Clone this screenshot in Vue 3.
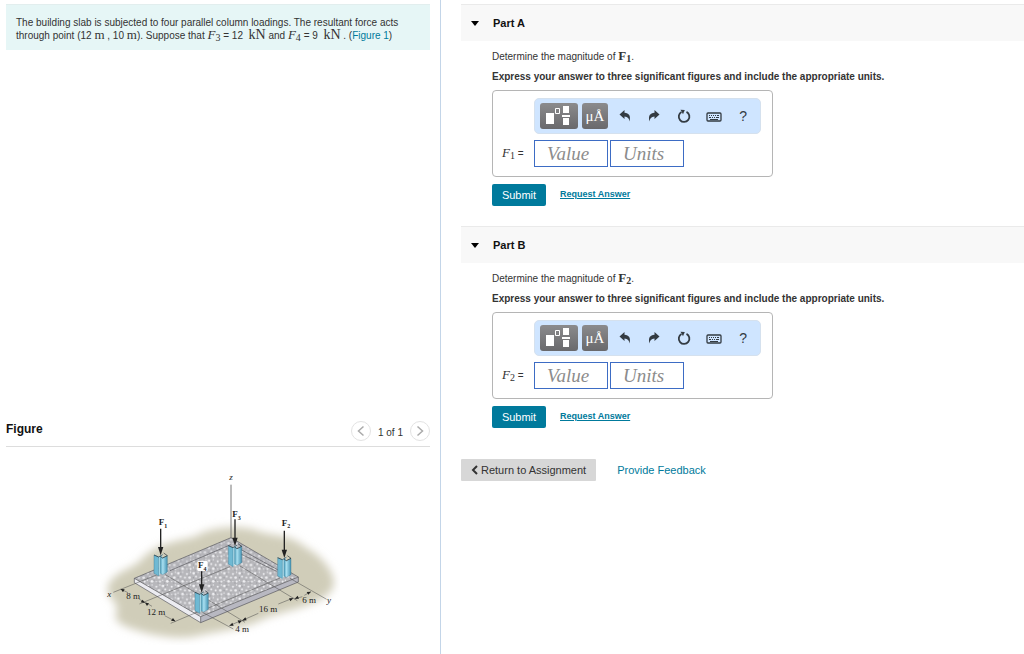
<script setup>
import { ref } from 'vue'

const parts = ref([
  { id: 'A', sub: '1', open: true, value: '', units: '' },
  { id: 'B', sub: '2', open: true, value: '', units: '' },
])

const columns = [
  { x: 162, y: 250, tail: 176 },
  { x: 385, y: 222, tail: 148 },
  { x: 533, y: 258, tail: 182 },
  { x: 285, y: 362, tail: 304 },
]

const forces = [
  { x: 176, y: 166, n: '1' },
  { x: 397, y: 142, n: '3' },
  { x: 545, y: 167, n: '2' },
  { x: 294, y: 295, n: '4' },
]
</script>

<template>
  <div class="page">
    <section class="left">
      <div class="problem">
        The building slab is subjected to four parallel column loadings. The resultant force acts
        through point (12 <span class="unit">m</span> , 10 <span class="unit">m</span>). Suppose that
        <span class="math"><i>F</i><sub>3</sub></span> = 12 &nbsp;<span class="kn">kN</span> and
        <span class="math"><i>F</i><sub>4</sub></span> = 9 &nbsp;<span class="kn">kN</span> .
        (<a href="#figure">Figure 1</a>)
      </div>

      <div id="figure" class="figure">
        <header class="figure-head">
          <h2>Figure</h2>
          <nav class="pager">
            <button type="button" aria-label="Previous figure">
              <svg viewBox="0 0 8 12" width="8" height="12"><path d="M6.5 1.5 1.5 6l5 4.5" /></svg>
            </button>
            <span>1 of 1</span>
            <button type="button" aria-label="Next figure">
              <svg viewBox="0 0 8 12" width="8" height="12"><path d="M1.5 1.5 6.5 6l-5 4.5" /></svg>
            </button>
          </nav>
        </header>

        <svg class="drawing" viewBox="0 0 720 525" role="img" aria-label="Building slab with four column loads">
          <defs>
            <filter id="soft" x="-10%" y="-15%" width="120%" height="130%"><feGaussianBlur stdDeviation="13" /></filter>
            <linearGradient id="steel" x1="0" x2="1">
              <stop offset="0" stop-color="#4e9fbd" /><stop offset=".35" stop-color="#a9dff0" /><stop offset="1" stop-color="#4594b4" />
            </linearGradient>
            <pattern id="stone" width="46" height="38" patternUnits="userSpaceOnUse">
              <rect width="46" height="38" fill="#b7b7bb" />
              <g fill="#f0f0f3">
                <circle cx="5" cy="6" r="4" /><circle cx="18" cy="3" r="2" /><circle cx="31" cy="8" r="3" />
                <circle cx="42" cy="3" r="2" /><circle cx="12" cy="16" r="3" /><circle cx="25" cy="19" r="3" />
                <circle cx="39" cy="19" r="4" /><circle cx="4" cy="27" r="2" /><circle cx="18" cy="30" r="4" />
                <circle cx="31" cy="31" r="2" /><circle cx="42" cy="31" r="3" />
              </g>
              <g fill="#9c9ca2">
                <circle cx="12" cy="8" r="2" /><circle cx="37" cy="12" r="2" /><circle cx="4" cy="19" r="2" />
                <circle cx="24" cy="27" r="2" /><circle cx="10" cy="35" r="2" /><circle cx="37" cy="35" r="2" />
              </g>
            </pattern>
          </defs>

          <path
            class="ground"
            d="M28 338 C60 295 100 300 130 262 C180 215 235 215 290 198 C330 168 440 164 480 186 C540 201 575 195 620 235 C675 262 720 330 695 360 C665 405 560 420 495 445 C430 480 340 485 290 498 C230 510 160 495 125 485 C70 470 35 455 50 425 C60 390 5 380 28 338Z"
          />

          <path class="front" d="M103 325v13l199 120V440Z" />
          <path class="side" d="M302 440v18l293-122v-15Z" />
          <path class="top" d="M103 325 393 203l202 118-293 119Z" />
          <path class="rim" d="M103 325 393 203l202 118-8 5-193-98-222 90Z" />
          <path class="edge" d="M210 302 392 224M418 236l120 66M418 250l112 54M103 325 393 203l202 118" />
          <path class="edge" d="M103 325v13l199 120 293-122v-15L302 440ZM302 440v18" />

          <path class="guide" d="M393 44v160" />
          <path class="line" d="M40 367 172 314M118 402 390 290M212 460 295 425M325 414 540 324M196 314 290 370M325 390 435 457M302 424 400 477M420 288 592 392M570 325 680 388" />
          <path class="line" d="M62 357l22 11M117 387l19 11M136 397l20 12M194 437l32 17M388 467l35-15M425 452l50-22M535 402l45-18M583 387l24-7M613 376l20-11" />
          <path class="arrow" d="M62 357l12 1-5 9ZM135 399l-13-2 6-8ZM135 398l12 2-6 8ZM226 454l-13-2 6-8ZM388 467l9-9 4 9ZM426 452l-13-1 4 10ZM426 452l10-10 4 9ZM580 385l-13 0 4 9ZM584 386l9-9 4 9ZM633 365l-13 1 5 8Z" />

          <g v-for="c in columns" :key="c.x">
            <path class="steel-web" :d="`M${c.x + 13} ${c.y + 10}l12-7v53l-12 12Z`" />
            <path class="steel-side" :d="`M${c.x} ${c.y + 5}l14 6v57l-14-8Z`" />
            <path class="steel" :d="`M${c.x + 19} ${c.y + 9}l7 5 14-7v49l-14 8-7-4Z`" />
            <path class="steel-rim" :d="`M${c.x} ${c.y + 5}l14 6 12-7M${c.x + 19} ${c.y + 9}l7 5 14-7-11-8`" />
            <path class="shaft" :d="`M${c.x + 20} ${c.tail}V${c.y - 8}`" />
            <path class="arrow" :d="`M${c.x + 12} ${c.y - 19}h16l-8 25Z`" />
          </g>

          <rect x="292" y="273" width="31" height="30" rx="4" fill="#fff" />
          <g class="force">
            <text v-for="f in forces" :key="f.n" :x="f.x" :y="f.y">F<tspan class="small" dy="7">{{ f.n }}</tspan></text>
          </g>
          <g class="dims">
            <text class="axis" x="388" y="31">z</text>
            <text class="axis" x="22" y="380">x</text>
            <text class="axis" x="681" y="398">y</text>
            <text x="79" y="387">8 m</text>
            <text x="141" y="434">12 m</text>
            <text x="406" y="485">4 m</text>
            <text x="477" y="426">16 m</text>
            <text x="607" y="399">6 m</text>
          </g>
        </svg>
      </div>
    </section>

    <main class="right">
      <section v-for="p in parts" :key="p.id" class="part">
        <h2 class="part-head">
          <button type="button" :aria-expanded="p.open" @click="p.open = !p.open">
            <svg viewBox="0 0 8 5" width="8" height="5"><path d="M0 0h8L4 5Z" /></svg>
            Part {{ p.id }}
          </button>
        </h2>
        <div v-show="p.open" class="part-body">
          <p class="ask">Determine the magnitude of <span class="vec">F<sub>{{ p.sub }}</sub></span>.</p>
          <p class="express">Express your answer to three significant figures and include the appropriate units.</p>

          <div class="answer">
            <div class="toolbar">
              <button type="button" class="tool" aria-label="Templates">
                <svg viewBox="0 0 38 26" width="38" height="26">
                  <path d="M6 10h8v11H6ZM23 3h6v7h-6ZM22 12h8v2h-8ZM23 15h6v7h-6Z" fill="#fff" />
                  <path d="M15.500 5.500h4v5h-4Z" fill="none" stroke="#fff" />
                </svg>
              </button>
              <button type="button" class="tool mu" aria-label="Units">μÅ</button>
              <button type="button" class="icon" aria-label="Undo">
                <svg viewBox="0 0 14 14" width="14" height="14"><path d="M1.500 5.500 6.500 1v2.800c4.500.2 6.500 3.200 5 8.700C11.200 9.500 9.800 7.800 6.500 7.600V10Z" /></svg>
              </button>
              <button type="button" class="icon" aria-label="Redo">
                <svg viewBox="0 0 14 14" width="14" height="14"><path d="M12.500 5.500 7.500 1v2.800C3 4 1 7 2.500 12.500 2.800 9.500 4.200 7.800 7.500 7.600V10Z" /></svg>
              </button>
              <button type="button" class="icon" aria-label="Reset">
                <svg viewBox="0 0 14 14" width="14" height="14"><path d="M9.500 2.900A5.300 5.300 0 1 1 4.500 3" fill="none" stroke="#333b42" stroke-width="1.800" /><path d="M3.500.8 7.800 1 6 5.200Z" /></svg>
              </button>
              <button type="button" class="icon" aria-label="Keyboard shortcuts">
                <svg viewBox="0 0 16 14" width="16" height="14"><rect x="1" y="4" width="14" height="8" rx="1" fill="none" stroke="#333b42" stroke-width="1.300" /><path d="M3 6h1v1H3ZM5 6h1v1H5ZM7 6h1v1H7ZM9 6h1v1H9ZM11 6h2v1h-2ZM3 8h2v1H3ZM6 8h1v1H6ZM8 8h1v1H8ZM10 8h3v1h-3ZM4 10h8v1H4Z" /></svg>
              </button>
              <button type="button" class="icon help" aria-label="Help">?</button>
            </div>
            <div class="entry">
              <label :for="`value-${p.id}`"><span class="math"><i>F</i><sub>{{ p.sub }}</sub></span> =</label>
              <input :id="`value-${p.id}`" v-model="p.value" type="text" placeholder="Value">
              <input v-model="p.units" type="text" placeholder="Units" aria-label="Units">
            </div>
          </div>

          <div class="actions">
            <button type="button" class="submit">Submit</button>
            <a href="#request">Request Answer</a>
          </div>
        </div>
      </section>

      <footer class="foot">
        <button type="button" class="return">
          <svg viewBox="0 0 7 10" width="7" height="10"><path d="M6 1 2 5l4 4" /></svg>Return to Assignment
        </button>
        <a href="#feedback">Provide Feedback</a>
      </footer>
    </main>
  </div>
</template>

<style>
body {
  background: #fff;
}
</style>

<style scoped>
.page {
  display: grid;
  grid-template-columns: 441fr 583fr;
  min-height: 100vh;
  font: 10px/13px "Liberation Sans", Arial, sans-serif;
  color: #333;
}

button,
input {
  font-family: inherit;
  margin: 0;
  padding: 0;
}

button {
  border: 0;
  background: none;
  cursor: pointer;
}

h2,
p {
  margin: 0;
}

a {
  color: #007a9c;
  text-decoration: none;
}

sub {
  line-height: 0;
}

.left {
  display: flex;
  flex-direction: column;
  justify-content: space-between;
  box-sizing: border-box;
  padding: 4px 10px 0 6px;
  border-right: 1px solid #c3d5e8;
}

.problem {
  padding: 11px 10px 8px;
  border-top: 1px solid #e2eeee;
  background: #e6f6f6;
}

.unit,
.math,
.vec {
  font-family: "Liberation Serif", serif;
}

.math {
  font-size: 13px;
  line-height: 10px;
}

.math sub {
  font-size: 10px;
  vertical-align: -2px;
}

.unit {
  font-size: 13px;
  line-height: 10px;
}

.kn {
  font: 14px/10px "Liberation Serif", serif;
}

.figure-head {
  display: flex;
  align-items: center;
  justify-content: space-between;
  height: 30px;
  border-bottom: 1px solid #ddd;
}

.figure-head h2 {
  padding-bottom: 4px;
  font-size: 12px;
  color: #111;
}

.pager {
  display: flex;
  align-items: center;
  gap: 7px;
}

.pager button {
  display: grid;
  place-items: center;
  width: 20px;
  height: 20px;
  border: 1px solid #e3e3e3;
  border-radius: 50%;
}

.pager path,
.return path {
  fill: none;
  stroke: #aaa;
  stroke-width: 1.5;
}

.pager span {
  padding-top: 3px;
}

.drawing {
  display: block;
  width: 240px;
  margin: 23px 0 9px 94px;
}

.ground {
  fill: #d0cdb9;
  filter: url(#soft);
}

.top {
  fill: url(#stone);
}

.rim {
  fill: #b4b4ba;
  fill-opacity: .3;
}

.front {
  fill: #ececf1;
}

.side {
  fill: #b8b8c1;
}

.edge {
  fill: none;
  stroke: #55555a;
  stroke-width: 2;
}

.line {
  fill: none;
  stroke: #4b4b4b;
  stroke-width: 1.5;
}

.guide {
  stroke: #777;
  stroke-width: 3;
}

.steel {
  fill: url(#steel);
  stroke: #2f6b84;
  stroke-width: 1;
}

.steel-side {
  fill: #6fb9d3;
  stroke: #2f6b84;
  stroke-width: 1;
}

.steel-web {
  fill: #b4e2f0;
}

.steel-rim {
  fill: none;
  stroke: #222f36;
  stroke-width: 2;
}

.shaft {
  stroke: #222;
  stroke-width: 4;
}

.arrow {
  fill: #222;
}

.force,
.dims {
  font: 27px "Liberation Serif", serif;
  fill: #222;
}

.force {
  font-weight: bold;
}

.small {
  font-size: 18px;
}

.axis {
  font-style: italic;
}

.right {
  padding: 4px 0 0 20px;
}

.part {
  margin-bottom: 20px;
}

.part-head {
  padding: 12px 10px 11px;
  border-top: 1px solid #eaeaea;
  background: #f8f8f8;
}

.part-head button {
  display: flex;
  align-items: center;
  gap: 14px;
  font-size: 11px;
  line-height: 13px;
  font-weight: bold;
  color: #111;
}

.part-body {
  padding-left: 31px;
}

.ask {
  padding-top: 9px;
}

.vec {
  font-size: 13px;
  line-height: 10px;
  font-weight: bold;
}

.vec sub {
  font-size: 10px;
  vertical-align: -2px;
}

.express {
  padding: 7px 0;
  font-weight: bold;
}

.answer {
  box-sizing: border-box;
  width: 281px;
  padding: 7px 11px 9px 9px;
  border: 1px solid #b5b5b5;
  border-radius: 4px;
}

.toolbar {
  display: flex;
  align-items: center;
  gap: 4px;
  box-sizing: border-box;
  height: 36px;
  margin-left: 32px;
  padding: 0 4px 0 5px;
  border: 1px solid #d5e1ee;
  border-radius: 5px;
  background: #cfe5ff;
}

.tool {
  width: 38px;
  height: 26px;
  border-radius: 3px;
  background: linear-gradient(#8b8b8d, #69696c);
}

.tool svg {
  display: block;
}

.mu {
  width: 26px;
  font: 15px/26px "Liberation Serif", serif;
  color: #fff;
}

.icon {
  display: grid;
  flex: 1;
  place-items: center;
  height: 26px;
  fill: #333b42;
  color: #333b42;
}

.help {
  font-size: 14px;
}

.entry {
  display: flex;
  align-items: center;
  gap: 2px;
  padding-top: 6px;
}

.entry label {
  width: 30px;
}

.entry input {
  box-sizing: border-box;
  width: 74px;
  height: 27px;
  padding-left: 12px;
  border: 1px solid #3d6cc4;
  border-radius: 0;
  font: italic 19px "Liberation Serif", serif;
  color: #333;
}

.entry input::placeholder {
  color: #8c8c8c;
  opacity: 1;
}

.actions {
  display: flex;
  gap: 14px;
  padding-top: 7px;
}

.actions a {
  padding-top: 4px;
  font-size: 9px;
  font-weight: bold;
  text-decoration: underline;
}

.submit {
  width: 54px;
  height: 22px;
  border-radius: 2px;
  background: #007a9c;
  font-size: 11px;
  color: #fff;
}

.foot {
  display: flex;
  align-items: center;
  gap: 21px;
  padding-top: 11px;
  font-size: 11px;
}

.return {
  display: flex;
  align-items: center;
  gap: 3px;
  height: 22px;
  padding: 0 10px;
  border-radius: 1px;
  background: #d7d7d7;
  font-size: 11px;
  color: #333;
}

.return path {
  stroke: #333;
  stroke-width: 2;
}
</style>
